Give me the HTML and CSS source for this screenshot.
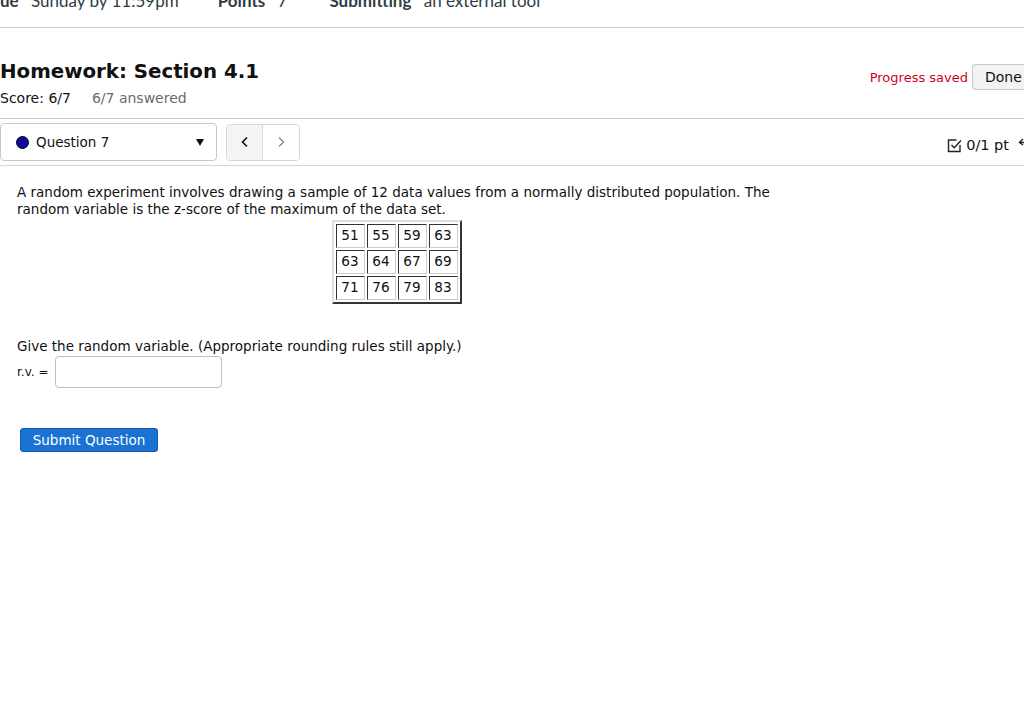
FILE: index.html
```html
<!DOCTYPE html>
<html>
<head>
<meta charset="utf-8">
<link rel="stylesheet" href="styles.css">
</head>
<body>
<div class="topbar">
  <span class="meta m1"><b>ue</b> Sunday by 11:59pm</span>
  <span class="meta m2"><b>Points</b> 7</span>
  <span class="meta m3"><b>Submitting</b> an external tool</span>
</div>
<div class="header">
  <div class="title-block">
    <h1 class="title">Homework: Section 4.1</h1>
    <div class="score"><span>Score: 6/7</span><span class="answered">6/7 answered</span></div>
  </div>
  <div class="header-actions">
    <span class="saved">Progress saved</span>
    <button class="done">Done</button>
  </div>
</div>
<div class="qbar">
  <div class="qselect">
    <span class="dot"></span>
    <span class="qname">Question 7</span>
    <span class="caret"></span>
  </div>
  <div class="qnav">
    <span class="navbtn prev"><svg width="10" height="12" viewBox="0 0 10 12"><path d="M7 1.5 L2.5 6 L7 10.5" fill="none" stroke="#111" stroke-width="1.6"/></svg></span>
    <span class="navbtn next"><svg width="10" height="12" viewBox="0 0 10 12"><path d="M3 1.5 L7.5 6 L3 10.5" fill="none" stroke="#888" stroke-width="1.4"/></svg></span>
  </div>
  <div class="points">
    <svg width="17" height="17" viewBox="0 0 17 17"><path d="M14 8 V14.5 H2.5 V3 H10.5" fill="none" stroke="#222" stroke-width="1.4"/><path d="M5.5 8 L8.2 10.8 L15 3.5" fill="none" stroke="#222" stroke-width="1.4"/></svg>
    <span class="pt">0/1 pt</span>
    <svg class="retry" width="10" height="16" viewBox="0 0 10 16"><path d="M6 2 L2.5 5.5 L6 8" fill="none" stroke="#222" stroke-width="1.4"/><path d="M2.5 5.5 H7 A3 3 0 0 1 7 12" fill="none" stroke="#222" stroke-width="1.4"/></svg>
  </div>
</div>
<div class="question">
  <p class="stem">A random experiment involves drawing a sample of 12 data values from a normally distributed population. The random variable is the z-score of the maximum of the data set.</p>
  <div class="table-wrap">
    <table class="data">
      <tr><td>51</td><td>55</td><td>59</td><td>63</td></tr>
      <tr><td>63</td><td>64</td><td>67</td><td>69</td></tr>
      <tr><td>71</td><td>76</td><td>79</td><td>83</td></tr>
    </table>
  </div>
  <p class="prompt">Give the random variable. (Appropriate rounding rules still apply.)</p>
  <div class="answer"><span class="label">r.v. =</span><span class="input"></span></div>
  <button class="submit">Submit Question</button>
</div>
</body>
</html>
```
FILE: styles.css
```css
* { box-sizing: border-box; }
body {
  margin: 0;
  font-family: "DejaVu Sans", Verdana, sans-serif;
  color: #1f1f1f;
  background: #fff;
  overflow: hidden;
}
.topbar {
  display: flex;
  align-items: flex-end;
  font-family: Lato, sans-serif;
  font-size: 17px;
  line-height: 18px;
  color: #2d3b45;
  margin-top: -8px;
  padding-bottom: 17px;
  height: 36px;
  border-bottom: 1px solid #c7cdd1;
}
.meta { white-space: nowrap; }
.m2 { margin-left: 39px; }
.m3 { margin-left: 42px; }
.meta b { font-weight: 700; margin-right: 8px; }
.header {
  display: flex;
  justify-content: space-between;
  align-items: flex-start;
  height: 91px;
  border-bottom: 1px solid #c7cdd1;
  padding-top: 31px;
}
.title {
  margin: 0;
  font-size: 19.8px;
  line-height: 26px;
  font-weight: 700;
  color: #111;
}
.score {
  margin-top: 4px;
  font-size: 14px;
  line-height: 18px;
  display: flex;
  gap: 21px;
  color: #111;
}
.answered { color: #6b6b6b; }
.header-actions {
  display: flex;
  align-items: center;
  gap: 4px;
  margin-top: 5px;
}
.saved { color: #d0021b; font-size: 13px; }
.done {
  font-family: inherit;
  font-size: 14px;
  color: #111;
  background: #f3f3f3;
  border: 1px solid #c8c8c8;
  border-radius: 4px 0 0 4px;
  border-right: none;
  height: 26px;
  width: 52px;
  padding: 0 0 0 12px;
  text-align: left;
}
.qbar {
  display: flex;
  align-items: center;
  height: 47px;
  border-bottom: 1px solid #d5d5d5;
}
.qselect {
  width: 217px;
  height: 38px;
  border: 1px solid #c8c8c8;
  border-radius: 4px;
  display: flex;
  align-items: center;
  padding: 0 12px 0 15px;
  font-size: 13.5px;
  color: #111;
}
.dot {
  width: 13px;
  height: 13px;
  border-radius: 50%;
  background: #0b0ba0;
  border: 1px solid #000;
  margin-right: 7px;
}
.qname { flex: 1; }
.caret {
  width: 0; height: 0;
  border-left: 4.5px solid transparent;
  border-right: 4.5px solid transparent;
  border-top: 7px solid #111;
}
.qnav {
  display: flex;
  margin-left: 9px;
  height: 37px;
  border: 1px solid #d8d8d8;
  border-radius: 4px;
  overflow: hidden;
}
.navbtn {
  width: 36px;
  display: flex;
  align-items: center;
  justify-content: center;
}
.prev { background: #f4f4f4; border-right: 1px solid #d8d8d8; }
.next { background: #fff; }
.points {
  margin-left: auto;
  display: flex;
  align-items: center;
  gap: 3px;
  font-size: 14.5px;
  color: #111;
  margin-right: -3px;
  margin-top: 6px;
}
.points .retry { margin-left: 5px; }
.question {
  padding: 18px 0 0 17px;
  width: 776px;
  font-size: 13.5px;
  color: #111;
}
.stem { margin: 0; line-height: 17px; }
.table-wrap { display: flex; justify-content: center; margin-top: 2px; }
.data {
  border: 2px solid;
  border-color: #ddd #333 #333 #ddd;
  border-spacing: 2px;
  padding: 0;
}
.data td {
  border: 1px solid;
  border-color: #333 #ccc #ccc #333;
  width: 29px;
  height: 24px;
  text-align: center;
  padding: 0 0 2px;
  font-size: 13.6px;
}
.prompt { margin: 34px 0 0; line-height: 17px; }
.answer {
  display: flex;
  align-items: center;
  margin-top: 1px;
  font-size: 12px;
}
.label { width: 38px; }
.input {
  width: 167px;
  height: 32px;
  border: 1px solid #bdbdbd;
  border-radius: 4px;
}
.submit {
  margin-top: 40px;
  margin-left: 3px;
  font-family: inherit;
  font-size: 13.5px;
  color: #fff;
  background: #1a73d3;
  border: 1px solid #0f5cb0;
  border-radius: 3px;
  height: 24px;
  width: 138px;
  padding: 0;
}
```
